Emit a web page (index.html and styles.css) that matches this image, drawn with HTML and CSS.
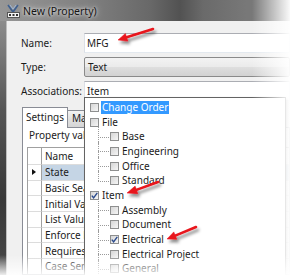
FILE: index.html
```html
<!DOCTYPE html>
<html lang="en">
<head>
    <meta charset="UTF-8">
    <title>New (Property)</title>
    <link rel="stylesheet" href="styles.css">
</head>
<body>

    <div class="window">
        <div class="titlebar">
            <svg class="app-icon" width="15" height="14" viewBox="0 0 15 14">
                <path d="M2 1 L7 8 L12 1" fill="none" stroke="#3d5f8f" stroke-width="1.6"/>
                <path d="M4 1 L7 5 L10 1" fill="none" stroke="#9fb6d6" stroke-width="1"/>
                <rect x="1.5" y="8.5" width="12" height="5" fill="#f4f4f4" stroke="#555" stroke-width="1"/>
                <rect x="3" y="10" width="2" height="2" fill="#333"/>
                <rect x="6.5" y="10" width="2" height="2" fill="#333"/>
                <rect x="10" y="10" width="2" height="2" fill="#333"/>
            </svg>
            <span class="title">New (Property)</span>
        </div>

        <div class="frame">
            <div class="frame-left"></div>
            <div class="client">
                <div class="form-row"><label>Name:</label><div class="textbox">MFG</div></div>
                <div class="form-row"><label>Type:</label><div class="combo">Text</div></div>
                <div class="form-row"><label>Associations:</label><div class="textbox">Item</div></div>

                <div class="tabs">
                    <div class="tab active">Settings</div>
                    <div class="tab">Main</div>
                </div>
                <div class="tab-panel">
                    <div class="caption">Property values</div>
                    <div class="grid">
                        <div class="grid-row head"><div class="rowhead"></div><div class="cell">Name</div></div>
                        <div class="grid-row current"><div class="rowhead"><span class="marker"></span></div><div class="cell">State</div></div>
                        <div class="grid-row"><div class="rowhead"></div><div class="cell">Basic Search</div></div>
                        <div class="grid-row"><div class="rowhead"></div><div class="cell">Initial Value</div></div>
                        <div class="grid-row"><div class="rowhead"></div><div class="cell">List Value</div></div>
                        <div class="grid-row"><div class="rowhead"></div><div class="cell">Enforce List</div></div>
                        <div class="grid-row"><div class="rowhead"></div><div class="cell">Requires Value</div></div>
                        <div class="grid-row"><div class="rowhead"></div><div class="cell">Case Sensitive</div></div>
                    </div>
                </div>
            </div>
        </div>
    </div>

    <div class="dropdown">
        <ul class="tree">
            <li><div class="node selected"><span class="chk"></span><span class="txt">Change Order</span></div></li>
            <li><div class="node"><span class="chk"></span><span class="txt">File</span></div>
                <ul>
                    <li><div class="node"><span class="chk"></span><span class="txt">Base</span></div></li>
                    <li><div class="node"><span class="chk"></span><span class="txt">Engineering</span></div></li>
                    <li><div class="node"><span class="chk"></span><span class="txt">Office</span></div></li>
                    <li><div class="node"><span class="chk"></span><span class="txt">Standard</span></div></li>
                </ul>
            </li>
            <li><div class="node"><span class="chk checked"><svg width="7" height="7" viewBox="0 0 7 7"><path d="M0.8 3.6 L2.6 5.8 L6.3 0.8" fill="none" stroke="#2a4a8c" stroke-width="1.4"/></svg></span><span class="txt">Item</span></div>
                <ul class="open-end">
                    <li><div class="node"><span class="chk"></span><span class="txt">Assembly</span></div></li>
                    <li><div class="node"><span class="chk"></span><span class="txt">Document</span></div></li>
                    <li><div class="node"><span class="chk checked"><svg width="7" height="7" viewBox="0 0 7 7"><path d="M0.8 3.6 L2.6 5.8 L6.3 0.8" fill="none" stroke="#2a4a8c" stroke-width="1.4"/></svg></span><span class="txt">Electrical</span></div></li>
                    <li><div class="node"><span class="chk"></span><span class="txt">Electrical Project</span></div></li>
                    <li><div class="node"><span class="chk"></span><span class="txt">General</span></div></li>
                </ul>
            </li>
        </ul>
    </div>

    <svg class="arrows" width="290" height="275" viewBox="0 0 290 275">
        <defs>
            <filter id="shadow" x="-30%" y="-30%" width="160%" height="180%">
                <feDropShadow dx="2" dy="3" stdDeviation="1.6" flood-color="#000" flood-opacity="0.45"/>
            </filter>
        </defs>
        <g filter="url(#shadow)" fill="#e8141c" stroke="#e8141c">
            <line x1="153" y1="29" x2="126.6" y2="37.3" stroke-width="2.6" stroke-linecap="round"/>
            <polygon points="118,40 127.8,41.1 125.4,33.5" stroke-width="0.5"/>
            <line x1="158" y1="182" x2="136.4" y2="189.9" stroke-width="2.6" stroke-linecap="round"/>
            <polygon points="127,193 137.8,193.7 135.1,186.1" stroke-width="0.5"/>
            <line x1="196" y1="227" x2="175.3" y2="235.6" stroke-width="2.6" stroke-linecap="round"/>
            <polygon points="167,239 176.8,239.3 173.8,231.9" stroke-width="0.5"/>
        </g>
    </svg>

    <div class="fade-right"></div>
    <div class="fade-bottom"></div>

</body>
</html>
```

FILE: styles.css
```css
* { box-sizing: border-box; }
body { margin: 0; width: 290px; height: 275px; overflow: hidden; position: relative; background: #fff; color: #1b1b1b; font-family: "Noto Sans", sans-serif; font-size: 10px; }

/* window chrome */
.window { width: 100%; height: 100%; overflow: hidden; display: flex; flex-direction: column; }
.titlebar { height: 21px; flex: none; display: flex; align-items: center; gap: 2px; padding-left: 6px; background: linear-gradient(to right, #969696, #808080 30%, #686868 52%, #525252 62%, #6a6a6a 70%, #787878 85%); }
.title { color: #151515; font-size: 10.5px; text-shadow: 0 0 3px #e8e8e8, 0 0 6px #ddd; }
.frame { flex: 1; display: flex; min-height: 0; }
.frame-left { width: 7px; flex: none; background: linear-gradient(#8c8c8c, #555 35%, #383838 70%, #484848); border-right: 1px solid #bdbdbd; }
.client { flex: 1; min-width: 0; background: #f0f0f0; padding: 12px 0 0 14px; display: flex; flex-direction: column; }

/* form rows */
.form-row { display: flex; align-items: center; height: 20px; margin-bottom: 4px; }
.form-row label { width: 63px; flex: none; }
.textbox { flex: 1; height: 20px; background: #fff; border: 1px solid; border-color: #abadb3 #e2e3ea #e3e9ef #dbdfe6; padding-left: 2px; line-height: 18px; }
.combo { flex: 1; height: 20px; border: 1px solid #8a8a8a; border-radius: 2px; padding-left: 3px; line-height: 18px; background: linear-gradient(#f3f3f3, #ebebeb 48%, #dedede 52%, #d2d2d2); }

/* tabs */
.tabs { display: flex; align-items: flex-end; height: 20px; margin: 2px 0 0 1px; position: relative; z-index: 1; }
.tab { height: 17px; margin-left: -1px; padding: 0 4px; border: 1px solid #898c95; border-bottom: none; line-height: 15px; background: linear-gradient(#f3f3f3, #e0e0e0 50%, #d5d5d5); }
.tab.active { width: 46px; height: 21px; margin: 0 0 -1px 0; padding: 2px 0 0; text-align: center; background: #fff; }
.tab-panel { flex: 1; margin-left: 1px; border: 1px solid #898c95; background: #fff; padding-top: 1px; overflow: hidden; }
.caption { height: 12px; line-height: 12px; padding-left: 6px; }

/* property grid */
.grid { margin: 6px 0 0 4px; border: 1px solid #a0a0a0; border-right: none; }
.grid-row { display: flex; height: 15.7px; }
.grid-row.head { height: 17px; }
.rowhead { width: 14px; flex: none; border-right: 1px solid #a0a0a0; border-bottom: 1px solid #dcdcdc; display: flex; align-items: center; padding-left: 4px; }
.cell { flex: 1; border-bottom: 1px solid #dcdcdc; padding-left: 3px; display: flex; align-items: center; }
.grid-row.current .cell { background: #c5d5e5; }
.marker { width: 0; height: 0; border-left: 4px solid #111; border-top: 3.5px solid transparent; border-bottom: 3.5px solid transparent; }

/* dropdown tree */
.dropdown { position: absolute; left: 84px; top: 97px; width: 202px; height: 178px; overflow: hidden; background: #fff; border: 1px solid #646464; border-bottom: none; box-shadow: 2px 2px 3px rgba(0,0,0,0.3); padding: 2px 0 0 5px; z-index: 2; }
.tree, .tree ul { list-style: none; margin: 0; padding: 0; }
.tree ul { padding-left: 20px; }
.tree ul li { position: relative; }
.tree ul li::before { content: ''; position: absolute; left: -12px; top: -2px; bottom: 0; border-left: 1px dotted #9a9a9a; }
.tree ul li:last-child::before { bottom: 50%; }
.tree ul.open-end li:last-child::before { bottom: 0; }
.tree ul li::after { content: ''; position: absolute; left: -12px; top: 50%; width: 11px; border-top: 1px dotted #9a9a9a; }
.node { height: 14.7px; display: flex; align-items: center; }
.chk { width: 9px; height: 9px; flex: none; border: 1px solid #8e8f8f; background: linear-gradient(135deg, #d6d6d6, #f6f6f6); display: flex; align-items: center; justify-content: center; }
.txt { margin-left: 2px; padding: 0 1px; line-height: 13px; white-space: nowrap; }
.selected .txt { background: #3399ff; color: #fff; }

/* overlays */
.arrows { position: absolute; left: 0; top: 0; z-index: 3; pointer-events: none; }
.fade-right { position: absolute; top: 0; right: 0; width: 38px; height: 100%; z-index: 4; background: linear-gradient(to right, rgba(255,255,255,0), rgba(255,255,255,0.96)); }
.fade-bottom { position: absolute; left: 0; bottom: 0; width: 100%; height: 20px; z-index: 4; background: linear-gradient(rgba(255,255,255,0), rgba(255,255,255,0.9)); }
```
